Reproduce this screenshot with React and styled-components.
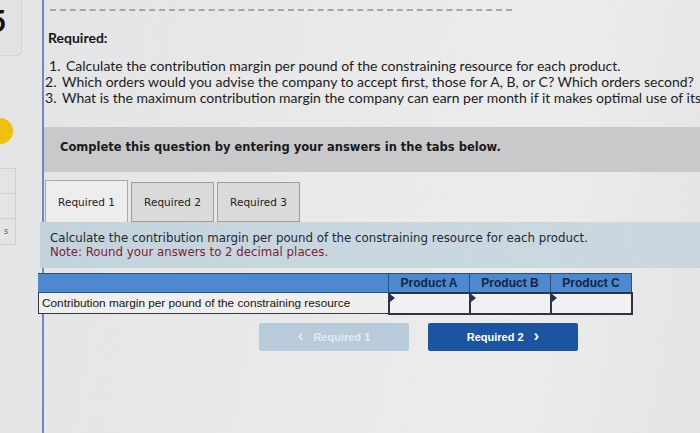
import styled, { createGlobalStyle } from "styled-components"

const GlobalStyle = createGlobalStyle`
    html, body {
        margin: 0;
        padding: 0;
        width: 700px;
        height: 433px;
        overflow: hidden;
        background: #e6e6e7;
    }
    * { box-sizing: border-box; }
`

const questions = [
    "Calculate the contribution margin per pound of the constraining resource for each product.",
    "Which orders would you advise the company to accept first, those for A, B, or C? Which orders second?",
    "What is the maximum contribution margin the company can earn per month if it makes optimal use of its",
]

const tabs = ["Required 1", "Required 2", "Required 3"]
const products = ["Product A", "Product B", "Product C"]

function App() {
    return (
        <>
            <GlobalStyle />
            <Page>
                <Sidebar>
                    <NumberCard>5</NumberCard>
                    <Dot />
                    <MiniList>
                        <MiniRow />
                        <MiniRow />
                        <MiniRow>s</MiniRow>
                    </MiniList>
                </Sidebar>
                <Main>
                    <ClippedLine />
                    <Heading>Required:</Heading>
                    <List>
                        {questions.map((q, i) => (
                            <Item key={i} $shift={i === 0 ? 4 : 0}>
                                <Num>{i + 1}.</Num>
                                <span>{q}</span>
                            </Item>
                        ))}
                    </List>
                    <Banner>Complete this question by entering your answers in the tabs below.</Banner>
                    <TabBar>
                        {tabs.map((t, i) => (
                            <Tab key={t} $active={i === 0}>{t}</Tab>
                        ))}
                    </TabBar>
                    <Panel>
                        <p>Calculate the contribution margin per pound of the constraining resource for each product.</p>
                        <Note>Note: Round your answers to 2 decimal places.</Note>
                    </Panel>
                    <Table>
                        <thead>
                            <tr>
                                <HeadCell $first />
                                {products.map((p) => (
                                    <HeadCell key={p}>{p}</HeadCell>
                                ))}
                            </tr>
                        </thead>
                        <tbody>
                            <tr>
                                <LabelCell>Contribution margin per pound of the constraining resource</LabelCell>
                                {products.map((p) => (
                                    <InputCell key={p}><Marker /></InputCell>
                                ))}
                            </tr>
                        </tbody>
                    </Table>
                    <NavRow>
                        <NavButton disabled>
                            <Chevron>&lsaquo;</Chevron> Required 1
                        </NavButton>
                        <NavButton $primary>
                            Required 2 <Chevron>&rsaquo;</Chevron>
                        </NavButton>
                    </NavRow>
                </Main>
            </Page>
        </>
    )
}

const Page = styled.div`
    display: flex;
    width: 700px;
    height: 433px;
    background: linear-gradient(100deg, #e3e4e5 0%, #e9e9ea 45%, #ececec 75%, #e4e4e4 100%);
    overflow: hidden;
`

const Sidebar = styled.div`
    width: 42px;
    flex-shrink: 0;
    position: relative;
    overflow: hidden;
`

const NumberCard = styled.div`
    width: 22px;
    height: 56px;
    border: 1px solid #d3d3d3;
    border-left: none;
    border-top: none;
    border-radius: 0 0 6px 0;
    background: #e2e2e2;
    font-family: "Lato", sans-serif;
    font-weight: 700;
    font-size: 30px;
    line-height: 40px;
    color: #111;
    text-indent: -11px;
    overflow: hidden;
`

const Dot = styled.div`
    width: 26px;
    height: 26px;
    border-radius: 50%;
    background: #f0c00c;
    margin: 62px 0 0 -13px;
`

const MiniList = styled.div`
    width: 16px;
    margin-top: 24px;
    border: 1px solid #cfcfcf;
    border-left: none;
    background: #e4e4e4;
`

const MiniRow = styled.div`
    height: 25px;
    border-bottom: 1px solid #cfcfcf;
    font-family: "DejaVu Sans", sans-serif;
    font-size: 8px;
    color: #555;
    line-height: 25px;
    padding-left: 4px;
    &:last-child { border-bottom: none; }
`

const Main = styled.div`
    flex: 1;
    border-left: 2px solid #6f87c2;
    display: flex;
    flex-direction: column;
    min-width: 0;
`

const ClippedLine = styled.div`
    margin: 9px 0 0 6px;
    width: 462px;
    height: 2px;
    border-top: 2px dashed #8a8a8a;
    opacity: 0.7;
`

const Heading = styled.h3`
    margin: 19px 0 0 4px;
    font-family: "Lato", sans-serif;
    font-weight: 700;
    font-size: 14px;
    color: #161616;
    line-height: 16px;
`

const List = styled.ol`
    margin: 12px 0 0 0;
    padding: 0;
    list-style: none;
    font-family: "Lato", sans-serif;
    font-size: 14px;
    color: #1c1c1c;
    white-space: nowrap;
    overflow: hidden;
`

const Item = styled.li`
    display: flex;
    line-height: 16px;
    padding-left: ${(p) => p.$shift}px;
`

const Num = styled.span`
    width: 18px;
    flex-shrink: 0;
    padding-left: 1px;
`

const Banner = styled.div`
    margin-top: 21px;
    height: 45px;
    background: #c8c9cb;
    padding: 0 0 6px 16px;
    display: flex;
    align-items: center;
    font-family: "DejaVu Sans", sans-serif;
    font-weight: 700;
    font-size: 11.5px;
    color: #1a1a1a;
`

const TabBar = styled.div`
    display: flex;
    gap: 3px;
    margin-top: 8px;
    padding-left: 1px;
    align-items: flex-end;
`

const Tab = styled.div`
    width: 83px;
    height: ${(p) => (p.$active ? 42 : 40)}px;
    background: ${(p) => (p.$active ? "#ededed" : "#dadada")};
    border: 1px solid ${(p) => (p.$active ? "#a9a9a9" : "#9d9d9d")};
    border-bottom: ${(p) => (p.$active ? "none" : "1px solid #9d9d9d")};
    display: flex;
    align-items: center;
    justify-content: center;
    font-family: "DejaVu Sans", sans-serif;
    font-size: 10.5px;
    color: #222;
`

const Panel = styled.div`
    margin-left: -4px;
    height: 46px;
    background: linear-gradient(90deg, #c3d3dd 0%, #c9d8e0 60%, #cbd7de 100%);
    padding: 9px 0 0 10px;
    font-family: "DejaVu Sans", sans-serif;
    font-size: 11.8px;
    line-height: 14px;
    color: #1e2830;
    p { margin: 0; white-space: nowrap; }
`

const Note = styled.p`
    color: #7c1f30;
`

const Table = styled.table`
    margin: 5px 0 0 -6px;
    border-collapse: collapse;
    font-family: "Liberation Sans", Arial, sans-serif;
    table-layout: fixed;
    width: 594px;
`

const HeadCell = styled.th`
    width: ${(p) => (p.$first ? 350 : 81)}px;
    height: 19px;
    background: #4c89cf;
    border: 1px solid #2f4f7e;
    border-left: ${(p) => (p.$first ? "1px solid #4c89cf" : "1px solid #2f4f7e")};
    font-size: 12px;
    font-weight: 700;
    color: #142642;
    padding: 0;
`

const LabelCell = styled.td`
    height: 21px;
    background: #efefef;
    border: 1px solid #3a3a3a;
    font-size: 11.8px;
    color: #141414;
    padding: 0 0 0 3px;
    white-space: nowrap;
    overflow: hidden;
`

const InputCell = styled.td`
    height: 21px;
    background: #f1f1f1;
    border: 2px solid #2e3440;
    position: relative;
    padding: 0;
`

const Marker = styled.span`
    position: absolute;
    left: 0;
    top: 0;
    width: 0;
    height: 0;
    border-top: 4px solid transparent;
    border-bottom: 4px solid transparent;
    border-left: 5px solid #1e3556;
`

const NavRow = styled.div`
    display: flex;
    gap: 19px;
    margin: 8px 0 0 215px;
`

const NavButton = styled.button`
    width: 150px;
    height: 28px;
    border: none;
    border-radius: 2px;
    background: ${(p) => (p.$primary ? "#1b54a1" : "#b8cbdb")};
    color: ${(p) => (p.$primary ? "#ffffff" : "#e3ebf1")};
    font-family: "Liberation Sans", Arial, sans-serif;
    font-weight: 700;
    font-size: 11px;
    display: flex;
    align-items: center;
    justify-content: center;
    gap: 10px;
    padding: 0;
    cursor: ${(p) => (p.disabled ? "default" : "pointer")};
`

const Chevron = styled.span`
    font-size: 17px;
    line-height: 1;
    margin-top: -2px;
`

export default App
